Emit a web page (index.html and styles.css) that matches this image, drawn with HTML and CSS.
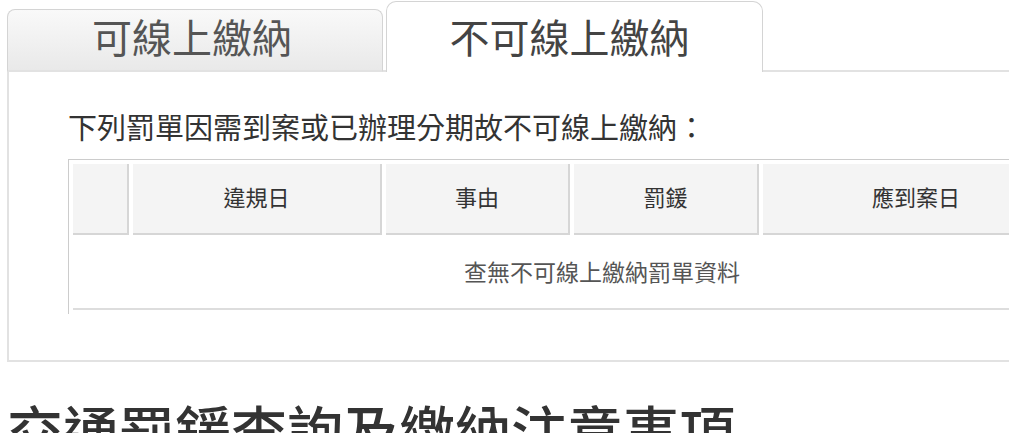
FILE: index.html
```html
<!DOCTYPE html>
<html lang="zh-Hant">
<head>
<meta charset="utf-8">
<title>交通罰鍰查詢</title>
<link rel="stylesheet" href="styles.css">
</head>
<body>
<div class="page">
  <div class="tabs">
    <div class="tab tab-off">可線上繳納</div>
    <div class="tab tab-on">不可線上繳納</div>
  </div>
  <div class="panel">
    <p class="intro">下列罰單因需到案或已辦理分期故不可線上繳納：</p>
    <table class="grid">
      <colgroup>
        <col class="c1"><col class="c2"><col class="c3"><col class="c4"><col class="c5"><col class="c6">
      </colgroup>
      <thead>
        <tr>
          <th></th>
          <th>違規日</th>
          <th>事由</th>
          <th>罰鍰</th>
          <th>應到案日</th>
          <th></th>
        </tr>
      </thead>
      <tbody>
        <tr>
          <td colspan="6">查無不可線上繳納罰單資料</td>
        </tr>
      </tbody>
    </table>
  </div>
  <h2 class="title">交通罰鍰查詢及繳納注意事項</h2>
</div>
</body>
</html>
```
FILE: styles.css
```css
html, body {
  margin: 0;
  padding: 0;
  background: #ffffff;
}
body {
  font-family: "Noto Sans CJK TC", "Noto Sans", "Liberation Sans", sans-serif;
  color: #333333;
}
.page {
  width: 1009px;
  height: 433px;
  overflow: hidden;
}
.tabs {
  display: flex;
  align-items: flex-end;
  gap: 3px;
  height: 72px;
  padding-left: 7px;
  position: relative;
  z-index: 1;
}
.tab {
  box-sizing: border-box;
  display: flex;
  justify-content: center;
  font-size: 40px;
  line-height: 52px;
  border: 1px solid #d4d4d4;
  border-bottom: none;
}
.tab-off {
  width: 376px;
  height: 63px;
  padding-right: 6px;
  color: #555555;
  border-radius: 8px 8px 0 0;
  background: linear-gradient(#f9f9f9, #e9e9e9);
  border-bottom: 2px solid #e2e2e2;
}
.tab-on {
  width: 377px;
  height: 71px;
  padding-top: 8px;
  padding-right: 10px;
  color: #444444;
  background: #ffffff;
  border-radius: 10px 10px 0 0;
}
.panel {
  box-sizing: border-box;
  width: 1250px;
  margin: -2px 0 0 7px;
  border: 2px solid #e2e2e2;
  padding: 34px 0 46px 59px;
}
.intro {
  margin: 0 0 13px;
  font-size: 29px;
  line-height: 40px;
  color: #333333;
}
.grid {
  table-layout: fixed;
  width: 1067px;
  border-collapse: separate;
  border-spacing: 4px;
  border-top: 1px solid #cccccc;
  border-left: 1px solid #cccccc;
}
.c1 { width: 56px; }
.c2 { width: 249px; }
.c3 { width: 184px; }
.c4 { width: 185px; }
.c5 { width: 308px; }
.c6 { width: 56px; }
.grid th {
  box-sizing: border-box;
  height: 71px;
  padding: 0 0 6px;
  background: #f4f4f4;
  border-right: 2px solid #d6d6d6;
  border-bottom: 2px solid #d6d6d6;
  font-size: 22px;
  font-weight: 400;
  color: #333333;
  text-align: center;
  vertical-align: middle;
}
.grid td {
  box-sizing: border-box;
  height: 71px;
  padding: 0 0 6px;
  border-bottom: 2px solid #dddddd;
  font-size: 23px;
  color: #555555;
  text-align: center;
  vertical-align: middle;
}
.title {
  margin: 33px 0 0 7px;
  font-size: 56px;
  line-height: 67px;
  font-weight: 500;
  color: #333333;
  white-space: nowrap;
}
```
